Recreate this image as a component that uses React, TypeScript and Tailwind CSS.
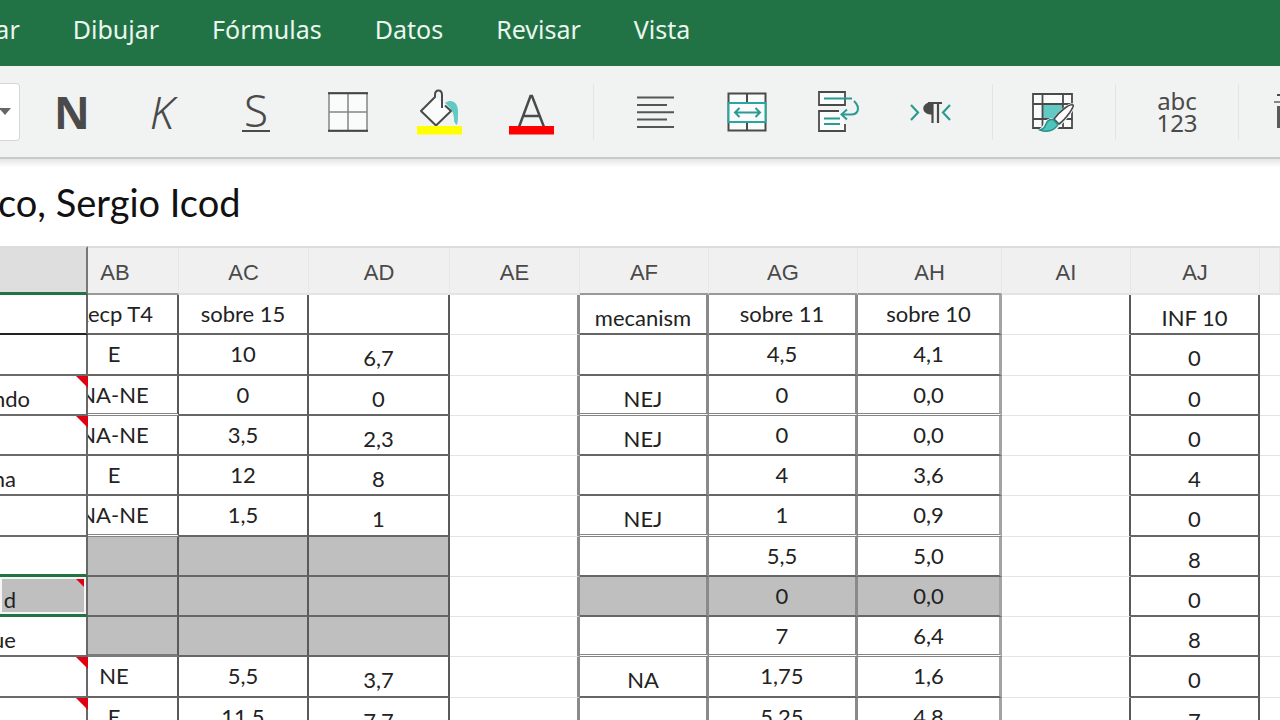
import React from 'react';

type Kind = 'frozen' | 'inner' | 'solid' | 'box' | 'plain';

interface Column {
  id: string;
  width: string;
  kind: Kind;
  low?: boolean;
  edge: string;
}

const tabs = ['Insertar', 'Dibujar', 'Fórmulas', 'Datos', 'Revisar', 'Vista'];

// edge is the right border of the data cells
const columns: Column[] = [
  { id: '', width: 'w-[88px]', kind: 'frozen', low: true, edge: 'border-r-2 border-r-[#686868]' },
  { id: 'AB', width: 'w-[91px]', kind: 'inner', edge: 'border-r-2 border-r-[#5a5a5a]' },
  { id: 'AC', width: 'w-[130px]', kind: 'solid', edge: 'border-r-2 border-r-[#5a5a5a]' },
  { id: 'AD', width: 'w-[141px]', kind: 'solid', low: true, edge: 'border-r-2 border-r-[#5a5a5a]' },
  { id: 'AE', width: 'w-[130px]', kind: 'plain', edge: 'border-r-3 border-r-[#8a8a8a]' },
  { id: 'AF', width: 'w-[129px]', kind: 'box', low: true, edge: 'border-r-3 border-r-[#8a8a8a]' },
  { id: 'AG', width: 'w-[149px]', kind: 'box', edge: 'border-r-3 border-r-[#8a8a8a]' },
  { id: 'AH', width: 'w-[144px]', kind: 'box', edge: 'border-r-3 border-r-[#a3a3a3]' },
  { id: 'AI', width: 'w-[129px]', kind: 'plain', edge: 'border-r-2 border-r-[#5a5a5a]' },
  { id: 'AJ', width: 'w-[129px]', kind: 'solid', low: true, edge: 'border-r-2 border-r-[#5a5a5a]' },
  { id: '', width: '', kind: 'plain', edge: '' },
];

const rows: string[][] = [
  ['', 'Recp T4', 'sobre 15', '', '', 'mecanism', 'sobre 11', 'sobre 10', '', 'INF 10', ''],
  ['', 'E', '10', '6,7', '', '', '4,5', '4,1', '', '0', ''],
  ['ndo', 'NA-NE', '0', '0', '', 'NEJ', '0', '0,0', '', '0', ''],
  ['', 'NA-NE', '3,5', '2,3', '', 'NEJ', '0', '0,0', '', '0', ''],
  ['na', 'E', '12', '8', '', '', '4', '3,6', '', '4', ''],
  ['', 'NA-NE', '1,5', '1', '', 'NEJ', '1', '0,9', '', '0', ''],
  ['', '', '', '', '', '', '5,5', '5,0', '', '8', ''],
  ['d', '', '', '', '', '', '0', '0,0', '', '0', ''],
  ['ue', '', '', '', '', '', '7', '6,4', '', '8', ''],
  ['', 'NE', '5,5', '3,7', '', 'NA', '1,75', '1,6', '', '0', ''],
  ['', 'E', '11,5', '7,7', '', '', '5,25', '4,8', '', '7', ''],
];

const noted = [2, 3, 7, 9, 10];
const selectedRow = 7;

const isShaded = (row: number, col: number) =>
  (row >= 6 && row <= 8 && col >= 1 && col <= 3) ||
  (row === selectedRow && (col === 0 || (col >= 5 && col <= 7)));

const bottomEdge = (kind: Kind, row: number, col: number) => {
  if (kind === 'plain') return 'border-b border-b-[#e4e4e4]';
  if (kind === 'frozen') {
    if (row === 6 || row === 7) return 'border-b-3 border-b-[#217346]';
    return row === 0 ? 'border-b-2 border-b-[#222]' : 'border-b-2 border-b-[#6a6a6a]';
  }
  if ((kind === 'box' || kind === 'inner') && row % 3 === 2) {
    return isShaded(row, col) ? 'border-b-3 border-b-[#7a7a7a]' : 'border-b-3 [border-bottom-style:double] border-b-[#858585]';
  }
  return 'border-b-2 border-b-[#666]';
};

const BordersIcon = () => (
  <svg className="w-10 h-10" viewBox="0 0 40 40" fill="none">
    <rect x="1" y="1" width="38" height="38" fill="#fafbfb" stroke="#858585" strokeWidth="1.5" />
    <path d="M20 1v38M1 20h38" stroke="#858585" strokeWidth="1.5" />
    <path d="M0 1.2h40M0 38.8h40" stroke="#444" strokeWidth="2" />
  </svg>
);

const FillIcon = () => (
  <svg className="w-12 h-12" viewBox="0 0 48 48" fill="none">
    <path d="M29 15c7-5 13 0 13 8 0 6 0 10-1 14-2-1-3-3-3-6 0-7-4-12-9-16z" fill="#62c9c3" />
    <path d="M19 9L5 23l15 14.500L35 23l-9-9z" fill="#fafbfb" />
    <path d="M26 20V7c0-6-7-6-7 0v2L5 23l15 14.500L35 23l-6-5.500" stroke="#4a4a4a" strokeWidth="2" strokeLinejoin="round" />
    <path d="M1 38h45v8.500H1z" fill="#ff0" />
  </svg>
);

const FontColorIcon = () => (
  <svg className="w-12 h-12" viewBox="0 0 48 48" fill="none">
    <path d="M11 39L22.500 8h1.500L36 39M15.500 28h16" stroke="#4a4a4a" strokeWidth="2.500" />
    <path d="M1 38h45v8.500H1z" fill="red" />
  </svg>
);

const AlignIcon = () => (
  <svg className="w-10 h-10" viewBox="0 0 40 40" fill="none">
    <path d="M2 5.500h37M2 13h30M2 20.200h37M2 27.500h30M2 35h37" stroke="#555" strokeWidth="2" />
  </svg>
);

const MergeIcon = () => (
  <svg className="w-10 h-10" viewBox="0 0 40 40" fill="none">
    <path d="M1.500 1.500h37v37h-37zM20 1.500v9M20 30v8.500" fill="#fafbfb" stroke="#4a4a4a" strokeWidth="2" />
    <path d="M1.500 11h37v19h-37z" fill="#fafbfb" stroke="#2aa5a0" strokeWidth="2" />
    <path d="M8 20.500h25M12.500 16L8 20.500l4.500 4.500M28.500 16l4.500 4.500-4.500 4.500" stroke="#2b9a94" strokeWidth="2" />
  </svg>
);

const WrapIcon = () => (
  <svg className="w-11 h-11" viewBox="0 0 44 44" fill="none">
    <path d="M2 2h26v13H2zM22 21H2v20h26v-7" fill="#fafbfb" stroke="#4a4a4a" strokeWidth="1.800" />
    <path d="M7 8.500h28M37 11c7 7 4 13.500-3 13.500h-9M30 19.500l-5.500 5 5.500 5M7 28.500h16M7 34h16" stroke="#2b9a94" strokeWidth="2" />
  </svg>
);

const DirectionIcon = () => (
  <svg className="w-11 h-11" viewBox="0 0 44 44" fill="none">
    <path d="M2 15l7 7.500L2 30M41 15l-7 7.500 7 7.500" stroke="#2b9a94" strokeWidth="2.200" />
    <path d="M24 24.500c-13 1-13-13 0-12.500z" fill="#4a4a4a" />
    <path d="M19 13h14M23.500 13v20M29 13v20" stroke="#4a4a4a" strokeWidth="2.200" />
  </svg>
);

const FormatTableIcon = () => (
  <svg className="w-12 h-11" viewBox="0 0 48 44" fill="none">
    <path d="M3 4h39v34H3z" fill="#fafbfb" />
    <path d="M12 14h21v15H12z" fill="#62c9c3" />
    <path d="M3 4h39v34H3zM3 14h39M3 29h39M12.500 4v34M33 4v34" stroke="#4a4a4a" strokeWidth="1.800" />
    <path d="M43 15c2 2-7 14-15 21-5 7-12 8-19 5 4-2 5-4 7-8 2-4 6-4 8-3 6-8 16-17 19-15z" fill="#fff" stroke="#f1f3f2" strokeWidth="3" />
    <path d="M43 15c2 1-7 14-14 19l-5-5c6-8 16-16 19-14z" fill="#fff" stroke="#4a4a4a" strokeWidth="1.600" />
    <path d="M23 29.500l5 5c-4 7-12 8-18 5.500 4-1 5-3 6-6 1.500-4 4-5 7-4.500z" fill="#4fc4bc" stroke="#278f8a" strokeWidth="1.500" />
  </svg>
);

const CellsIcon = () => (
  <svg className="w-11 h-11 shrink-0" viewBox="0 0 44 44" fill="none">
    <path d="M3 5h36" stroke="#4a4a4a" strokeWidth="2" />
    <path d="M0 12h42" stroke="#858585" strokeWidth="2" />
    <path d="M3 16h36v22H3z" fill="#5a5a5a" />
  </svg>
);

const ToolButton = ({ label, children }: { label: string; children: React.ReactNode }) => (
  <button type="button" aria-label={label} className="flex h-14 w-[92px] shrink-0 items-center justify-center text-[#4a4a4a]">
    {children}
  </button>
);

const Divider = () => <div className="mx-[15px] h-14 w-px shrink-0 bg-[#e3e5e4]" />;

export default function App() {
  return (
    <div className="h-screen overflow-hidden bg-white font-['Lato',sans-serif] text-[#222]">
      <nav className="flex h-[66px] items-center overflow-hidden bg-[#217346] pb-1.5 font-['Noto_Sans',sans-serif] text-[25px] text-[#eaf6ee]">
        <div className="-ml-[74px] flex gap-[53px]">
          {tabs.map((tab) => (
            <button key={tab} type="button" className="shrink-0">
              {tab}
            </button>
          ))}
        </div>
      </nav>

      <div className="flex h-[93px] items-center overflow-hidden border-b-2 border-[#c8cac9] bg-[#f1f3f2]">
        <button type="button" aria-label="Tamaño de fuente" className="mr-1.5 flex h-[58px] w-5 shrink-0 items-center justify-end rounded-r border border-l-0 border-[#d5d7d6] bg-white pr-2">
          <svg className="h-2 w-3 shrink-0" viewBox="0 0 12 8">
            <path d="M0 0h12L6 7z" fill="#666" />
          </svg>
        </button>
        <ToolButton label="Negrita"><span className="font-['Noto_Sans',sans-serif] text-[44px] font-bold">N</span></ToolButton>
        <ToolButton label="Cursiva"><span className="pr-1 font-['Noto_Sans',sans-serif] text-[44px] font-light italic">K</span></ToolButton>
        <ToolButton label="Subrayado"><span className="flex h-10 w-7 justify-center border-b-2 border-[#4a4a4a] font-['Noto_Sans',sans-serif] text-[44px] leading-9 font-light">S</span></ToolButton>
        <ToolButton label="Bordes"><BordersIcon /></ToolButton>
        <ToolButton label="Color de relleno"><FillIcon /></ToolButton>
        <ToolButton label="Color de fuente"><FontColorIcon /></ToolButton>
        <Divider />
        <ToolButton label="Alineación"><AlignIcon /></ToolButton>
        <ToolButton label="Combinar y centrar"><MergeIcon /></ToolButton>
        <ToolButton label="Ajustar texto"><WrapIcon /></ToolButton>
        <ToolButton label="Dirección del texto"><DirectionIcon /></ToolButton>
        <Divider />
        <ToolButton label="Formato como tabla"><FormatTableIcon /></ToolButton>
        <Divider />
        <ToolButton label="Formato de número">
          <span className="flex flex-col font-['Noto_Sans',sans-serif] text-2xl leading-[22px]">
            <span>abc</span>
            <span>123</span>
          </span>
        </ToolButton>
        <Divider />
        <button type="button" aria-label="Celdas" className="ml-5 shrink-0">
          <CellsIcon />
        </button>
      </div>

      <div className="flex h-[87px] items-center overflow-hidden bg-linear-to-b from-[#e4e5e4] via-white via-10% to-white text-[38px] text-[#111]">
        <p className="-ml-0.5 whitespace-nowrap">co, Sergio Icod</p>
      </div>

      <table className="w-full table-fixed border-separate border-spacing-0 text-center text-[22px] leading-7">
        <thead>
          <tr className="h-[49px] bg-[#f0f0f0] font-['Liberation_Sans',sans-serif] text-[#4a4a4a]">
            {columns.map((column, c) => (
              <th
                key={c}
                className={`${column.width} overflow-hidden border-t-2 border-t-[#dcdcdc] p-0 pt-1 font-normal ${
                  c === 0
                    ? 'border-r-2 border-r-[#777] border-b-3 border-b-[#217346] bg-[#dedede]'
                    : `border-r border-r-[#e6e6e6] border-b-2 ${column.kind === 'box' || column.kind === 'inner' ? 'border-b-[#999]' : 'border-b-[#e4e4e4]'}`
                }`}
              >
                <div className={c === 1 ? 'flex justify-end' : ''}>
                  <div className={c === 1 ? 'w-[126px] shrink-0' : ''}>{column.id}</div>
                </div>
              </th>
            ))}
          </tr>
        </thead>
        <tbody>
          {rows.map((row, r) => (
            <tr key={r} className={r % 4 === 1 ? 'h-[41px]' : 'h-10'}>
              {row.map((value, c) => {
                const { kind, low, edge } = columns[c];
                const selected = c === 0 && r === selectedRow;
                return (
                  <td
                    key={c}
                    className={`relative p-0 align-top ${edge} ${bottomEdge(kind, r, c)} ${isShaded(r, c) ? 'bg-[#bfbfbf]' : 'bg-white'} ${selected ? 'shadow-[inset_0_0_0_2px_#f5f5f5]' : ''}`}
                  >
                    <div className={`flex h-9 overflow-hidden ${low ? 'pt-[9px]' : 'pt-[5px]'} ${c === 0 || c === 1 ? 'justify-end' : 'justify-center'}`}>
                      <span className={c === 0 ? (r === 2 ? 'pr-14' : 'pr-[70px]') : c === 1 ? 'w-[126px] shrink-0' : ''}>{value}</span>
                    </div>
                    {c === 0 && noted.includes(r) && (
                      <span
                        className={`absolute bg-[#e0000f] [clip-path:polygon(0_0,100%_0,100%_100%)] ${selected ? 'top-0.5 right-0.5 size-2' : 'top-0 -right-0.5 size-3'}`}
                      />
                    )}
                  </td>
                );
              })}
            </tr>
          ))}
        </tbody>
      </table>
    </div>
  );
}
